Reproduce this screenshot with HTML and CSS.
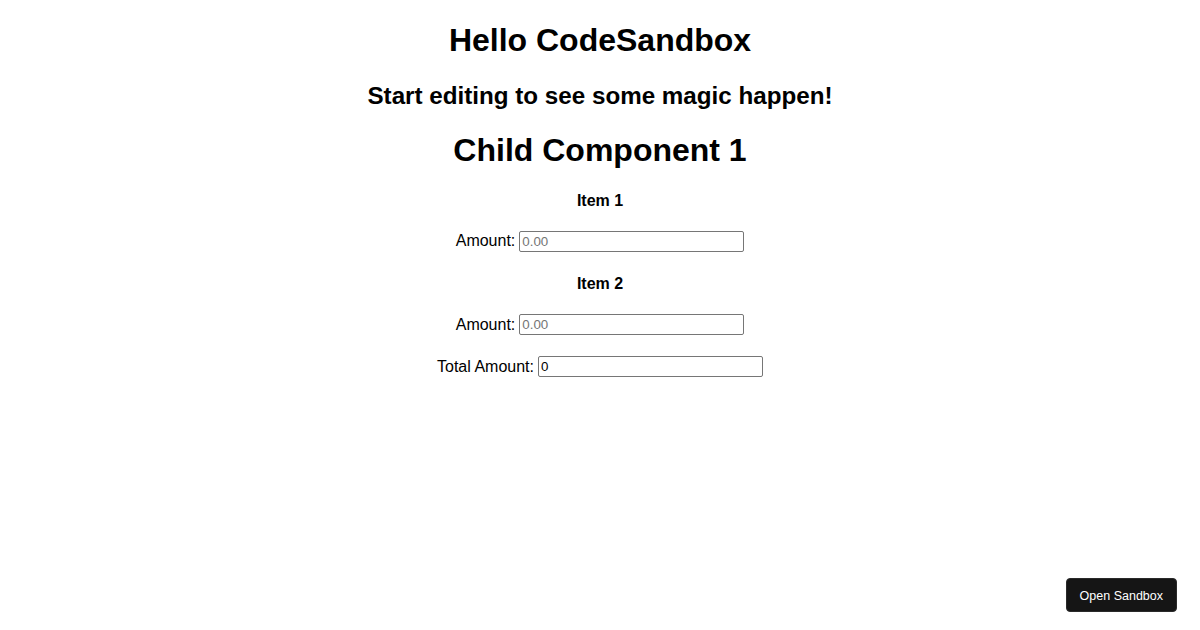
FILE: index.html
```html
<!DOCTYPE html>
<html>
<head>
<meta charset="utf-8">
<link rel="stylesheet" href="styles.css">
</head>
<body>
<div class="app">
  <h1 class="title">Hello CodeSandbox</h1>
  <h2 class="subtitle">Start editing to see some magic happen!</h2>
  <h1 class="title">Child Component 1</h1>
  <h4 class="item">Item 1</h4>
  <div class="row"><label>Amount: </label><input class="field" type="text" placeholder="0.00"></div>
  <h4 class="item">Item 2</h4>
  <div class="row"><label>Amount: </label><input class="field" type="text" placeholder="0.00"></div>
  <div class="row total"><label>Total Amount: </label><input class="field" type="text" value="0"></div>
</div>
<a class="open-sandbox">Open Sandbox</a>
</body>
</html>
```
FILE: styles.css
```css
body {
  margin: 0 8px;
  background: #fff;
}
.app {
  font-family: "Liberation Sans", Arial, sans-serif;
  text-align: center;
  color: #000;
}
.title {
  font-size: 32px;
  line-height: 38px;
  margin: 21.44px 0;
}
.subtitle {
  font-size: 24.2px;
  line-height: 29px;
  margin: 19.92px 0;
}
.item {
  font-size: 16px;
  line-height: 19.5px;
  margin: 21.8px 0 19.8px;
}
.row {
  font-size: 16px;
  margin: 16px 0;
  display: flex;
  justify-content: center;
  align-items: center;
  gap: 4px;
  height: 22px;
}
.row.total {
  margin-top: 20px;
}
.field {
  font-family: "Liberation Sans", Arial, sans-serif;
  font-size: 13.33px;
  height: 21px;
  width: 225px;
  border: 1px solid #767676;
  border-radius: 2px;
  padding: 0 2px;
  margin: 0;
  box-sizing: border-box;
}
.field::placeholder {
  color: #757575;
}
.open-sandbox {
  position: fixed;
  right: 23px;
  bottom: 18px;
  background: #151515;
  color: #fff;
  font-family: "Liberation Sans", Arial, sans-serif;
  font-size: 12.5px;
  padding: 0 13px;
  height: 34px;
  line-height: 34px;
  border-radius: 4px;
  border: 1px solid #2a2a2a;
  box-sizing: border-box;
}
```
